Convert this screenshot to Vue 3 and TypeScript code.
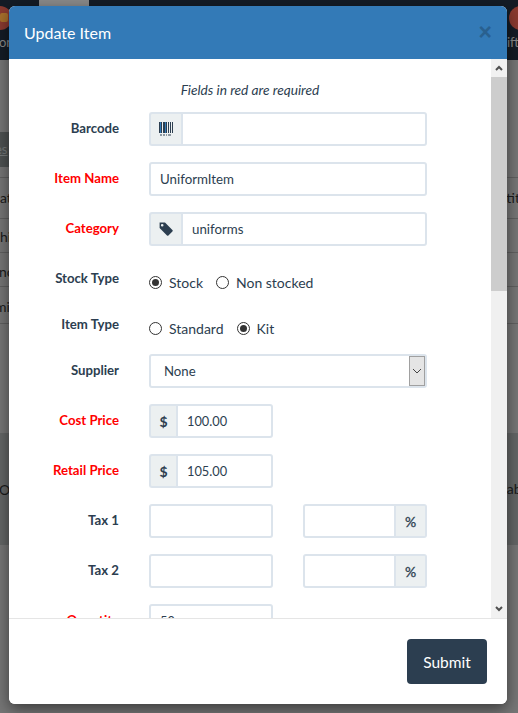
<script setup lang="ts">
interface Crumb { text: string; top: number; left?: number; right?: number }
const leftBits: Crumb[] = [
  { text: 'at', top: 189, left: 0 },
  { text: 'hi', top: 228, left: 0 },
  { text: 'no', top: 263, left: -1 },
  { text: 'mi', top: 298, left: -5 },
  { text: 'Op', top: 481, left: -1 },
]
const rightBits: Crumb[] = [
  { text: 'tit', top: 189, right: -2 },
  { text: 'abe', top: 480, right: -11 },
]
</script>

<template>
  <div class="page">
    <div class="backdrop" aria-hidden="true">
      <div class="nav">
        <div class="tab"></div>
        <span class="badge badge-left"><i class="pic"></i></span>
        <span class="badge badge-right"></span>
        <span class="nav-text nav-text-left">on</span>
        <span class="nav-text nav-text-right">ift</span>
      </div>
      <div class="bg-btn"><span>es</span></div>
      <div class="bg-row" v-for="y in [177, 218, 252, 286, 323]" :key="y" :style="{ top: y + 'px' }"></div>
      <div class="bg-band"></div>
      <span v-for="b in leftBits" :key="b.text" class="crumb" :style="{ top: b.top + 'px', left: b.left + 'px' }">{{ b.text }}</span>
      <span v-for="b in rightBits" :key="b.text" class="crumb" :style="{ top: b.top + 'px', right: b.right + 'px' }">{{ b.text }}</span>
    </div>

    <div class="modal">
      <header class="modal-header">
        <h4>Update Item</h4>
        <span class="close">×</span>
      </header>

      <div class="modal-body">
        <div class="scroll-content">
          <p class="required-note">Fields in red are required</p>

          <div class="row">
            <label>Barcode</label>
            <div class="group wide">
              <span class="addon">
                <svg width="14" height="14" viewBox="0 0 14 14">
                  <path fill="#2c3e50" d="M0 0h1v11H0zM2 0h1v11H2zM4 0h2v11H4zM7 0h1v11H7zM9 0h1v11H9zM11 0h1v11h-1zM13 0h1v11h-1zM1 12.5h2v1H1zM4 12.5h2v1H4zM7 12.5h1v1H7zM9 12.5h3v1H9z"/>
                  <path fill="#337ab7" d="M1 0h1v11H1zM6 0h1v11H6z"/>
                </svg>
              </span>
              <input type="text" />
            </div>
          </div>

          <div class="row">
            <label class="req">Item Name</label>
            <input class="wide solo" type="text" value="UniformItem" />
          </div>

          <div class="row">
            <label class="req">Category</label>
            <div class="group wide">
              <span class="addon">
                <svg width="14" height="14" viewBox="0 0 14 14">
                  <path fill="#2c3e50" fill-rule="evenodd" d="M0.6 0.6H6L13.4 8a1 1 0 0 1 0 1.4L9.4 13.4a1 1 0 0 1-1.4 0L0.6 6zM3.2 2a1.3 1.3 0 1 0 0 2.6a1.3 1.3 0 0 0 0-2.6z"/>
                </svg>
              </span>
              <input type="text" value="uniforms" />
            </div>
          </div>

          <div class="row radio-row">
            <label>Stock Type</label>
            <div class="radios">
              <span class="radio on"></span><span class="radio-label">Stock</span>
              <span class="radio"></span><span class="radio-label">Non stocked</span>
            </div>
          </div>

          <div class="row radio-row">
            <label>Item Type</label>
            <div class="radios">
              <span class="radio"></span><span class="radio-label">Standard</span>
              <span class="radio on"></span><span class="radio-label">Kit</span>
            </div>
          </div>

          <div class="row">
            <label>Supplier</label>
            <div class="select wide">
              <span>None</span>
              <span class="select-arrow">
                <svg width="10" height="6" viewBox="0 0 10 6"><path d="M1 1l4 4 4-4" fill="none" stroke="#444" stroke-width="1"/></svg>
              </span>
            </div>
          </div>

          <div class="row">
            <label class="req">Cost Price</label>
            <div class="group narrow">
              <span class="addon small"><b>$</b></span>
              <input class="num" type="text" value="100.00" />
            </div>
          </div>

          <div class="row">
            <label class="req">Retail Price</label>
            <div class="group narrow">
              <span class="addon small"><b>$</b></span>
              <input class="num" type="text" value="105.00" />
            </div>
          </div>

          <div class="row">
            <label>Tax 1</label>
            <input class="narrow solo" type="text" />
            <div class="group pct">
              <input type="text" />
              <span class="addon small right">%</span>
            </div>
          </div>

          <div class="row">
            <label>Tax 2</label>
            <input class="narrow solo" type="text" />
            <div class="group pct">
              <input type="text" />
              <span class="addon small right">%</span>
            </div>
          </div>

          <div class="row">
            <label class="req">Quantity</label>
            <input class="narrow solo num" type="text" value="50" />
          </div>
        </div>

        <div class="scrollbar">
          <span class="sb-btn">
            <svg width="8" height="6" viewBox="0 0 8 6"><path d="M1 5l3-3 3 3" fill="none" stroke="#505050" stroke-width="2"/></svg>
          </span>
          <div class="sb-track"><div class="sb-thumb"></div></div>
          <span class="sb-btn">
            <svg width="8" height="6" viewBox="0 0 8 6"><path d="M1 1l3 3 3-3" fill="none" stroke="#505050" stroke-width="2"/></svg>
          </span>
        </div>
      </div>

      <footer class="modal-footer">
        <button type="button">Submit</button>
      </footer>
    </div>
  </div>
</template>

<style>
html, body { margin: 0; padding: 0; overflow: hidden; }
</style>

<style scoped>
.page {
  position: relative;
  width: 518px;
  height: 713px;
  overflow: hidden;
  padding: 6px 11px 9px 9px;
  box-sizing: border-box;
  font-family: Lato, sans-serif;
  color: #2c3e50;
  background: #767676;
}
.backdrop { position: absolute; inset: 0; font-size: 14px; color: #1a1a1a; }
.nav { position: absolute; left: 0; top: 0; right: 0; height: 60px; background: #141c26; }
.tab { position: absolute; left: 39px; top: 0; width: 50px; height: 6px; background: #8a8a8a; }
.badge { position: absolute; top: 6px; width: 24px; height: 24px; border-radius: 50%; background: #8a3a30; }
.badge-left { left: -12px; }
.badge-right { right: -15px; }
.pic { position: absolute; left: 12px; top: 7px; width: 8px; height: 9px; background: #a8702c; border-radius: 2px; }
.nav-text { position: absolute; top: 34px; font-size: 13px; color: #8a8a8a; }
.nav-text-left { left: -1px; }
.nav-text-right { right: -1px; }
.bg-btn { position: absolute; left: 0; top: 132px; width: 9px; height: 35px; background: #4e5252; overflow: hidden; font-size: 13px; color: #767a7a; line-height: 35px; }
.bg-btn span { margin-left: -5px; text-decoration: underline; }
.bg-row { position: absolute; left: 0; right: 0; height: 1px; background: #606060; }
.bg-band { position: absolute; left: 0; right: 0; top: 433px; height: 112px; background: #646666; }
.crumb { position: absolute; line-height: 18px; white-space: nowrap; }

.modal {
  position: relative;
  height: 698px;
  display: flex;
  flex-direction: column;
  background: #fff;
  border-radius: 6px;
  overflow: hidden;
  box-shadow: 0 5px 15px rgba(0, 0, 0, 0.5);
}
.modal-header {
  height: 53px;
  flex: none;
  display: flex;
  align-items: center;
  justify-content: space-between;
  padding: 0 15px;
  background: #337ab7;
}
.modal-header h4 { margin: 0; font-size: 16px; font-weight: 400; color: #fff; }
.close { font-size: 23px; font-weight: 700; line-height: 1; color: #29608f; font-family: "Liberation Sans", sans-serif; }

.modal-body { flex: 1; min-height: 0; display: flex; overflow: hidden; }
.scroll-content { flex: 1; min-width: 0; height: 0; padding-top: 21px; }
.required-note { margin: 0 0 12px; text-align: center; font-style: italic; font-size: 13.7px; line-height: 20px; }

.row { display: flex; height: 34px; margin-bottom: 16px; align-items: flex-start; }
label {
  width: 110px;
  flex: none;
  margin-right: 30px;
  text-align: right;
  font-size: 13.2px;
  font-weight: 700;
  line-height: 20px;
  padding-top: 6px;
  box-sizing: border-box;
  height: 34px;
}
label.req { color: #ff0000; }
.wide { width: 278px; }
.narrow { width: 124px; }
.pct { width: 124px; margin-left: 30px; }
input {
  box-sizing: border-box;
  height: 34px;
  min-width: 0;
  padding: 0 9px;
  border: 2px solid #dce4ec;
  border-radius: 3px;
  outline: none;
  background: #fff;
  color: #2c3e50;
  font: 13.3px Lato, sans-serif;
}
input.num { font-size: 12.8px; }
.group { display: flex; height: 34px; }
.group input { flex: 1; width: 0; border-radius: 0 3px 3px 0; }
.addon {
  flex: none;
  box-sizing: border-box;
  width: 32px;
  height: 34px;
  display: flex;
  align-items: center;
  justify-content: center;
  background: #ecf0f1;
  border: 2px solid #dce4ec;
  border-right: 0;
  border-radius: 3px 0 0 3px;
  font-size: 14px;
  color: #2c3e50;
}
.addon.small { width: 27px; }
.addon.right { border: 2px solid #dce4ec; border-left: 0; border-radius: 0 3px 3px 0; width: 31px; font-size: 14px; -webkit-text-stroke: 0.3px #2c3e50; }
.pct input { border-radius: 3px 0 0 3px; }

.radio-row { height: 30px; }
.radios { display: flex; align-items: center; height: 20px; margin-top: 10px; font-size: 14px; }
.radio {
  box-sizing: border-box;
  width: 13px;
  height: 13px;
  border: 1px solid #333;
  border-radius: 50%;
  margin-right: 7px;
  position: relative;
}
.radio.on::after {
  content: '';
  position: absolute;
  inset: 2px;
  border-radius: 50%;
  background: #333;
}
.radio-label { margin-right: 13px; }

.select {
  box-sizing: border-box;
  height: 34px;
  border: 2px solid #dce4ec;
  border-radius: 3px;
  display: flex;
  align-items: center;
  justify-content: space-between;
  padding-left: 13px;
  font-size: 13.2px;
}
.select-arrow {
  width: 16px;
  height: 30px;
  box-sizing: border-box;
  display: flex;
  align-items: center;
  justify-content: center;
  background: #e5e5e5;
  border: 1px solid #a0a0a0;
}

.scrollbar {
  flex: none;
  width: 16px;
  margin-left: auto;
  display: flex;
  flex-direction: column;
  background: #f0f0f0;
}
.sb-btn { height: 18px; flex: none; display: flex; align-items: center; justify-content: center; background: #f1f1f1; }
.sb-track { flex: 1; }
.sb-thumb { height: 214px; background: #cdcdcd; }

.modal-footer {
  flex: none;
  height: 86px;
  box-sizing: border-box;
  border-top: 1px solid #e5e5e5;
  display: flex;
  justify-content: flex-end;
  align-items: flex-start;
  padding: 20px 20px 0 0;
  background: #fff;
}
button {
  width: 80px;
  height: 45px;
  border: 0;
  border-radius: 4px;
  background: #2c3e50;
  color: #fff;
  font: 15.5px Lato, sans-serif;
}
</style>
